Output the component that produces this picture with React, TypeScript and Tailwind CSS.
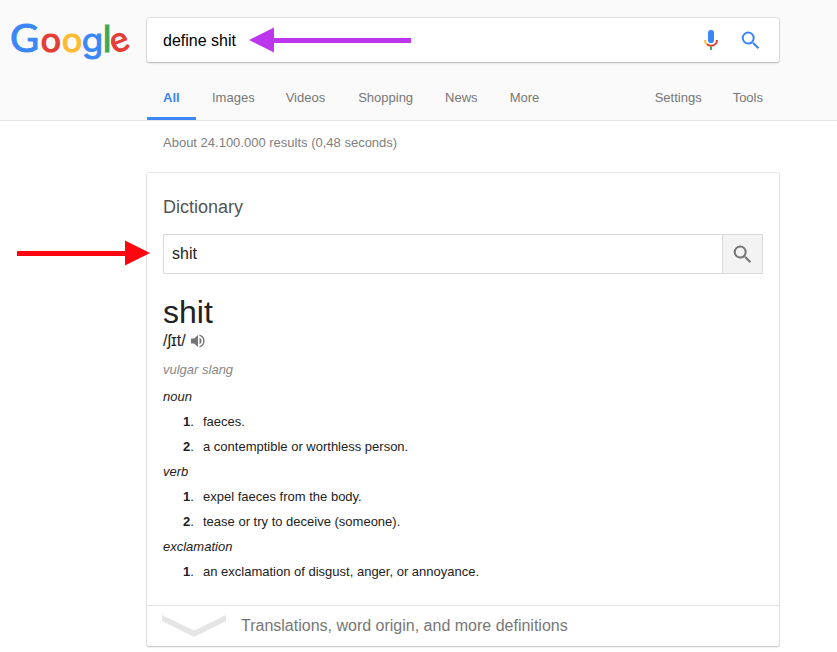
import { useState } from "react";

const TABS = [
  { label: "All", gap: "" },
  { label: "Images", gap: "ml-4" },
  { label: "Videos", gap: "ml-[31px]" },
  { label: "Shopping", gap: "ml-[33px]" },
  { label: "News", gap: "ml-8" },
  { label: "More", gap: "ml-8" },
];

const SENSES = [
  { part: "noun", items: ["faeces.", "a contemptible or worthless person."] },
  { part: "verb", items: ["expel faeces from the body.", "tease or try to deceive (someone)."] },
  { part: "exclamation", items: ["an exclamation of disgust, anger, or annoyance."] },
];

const SEARCH_PATH =
  "M15.5 14h-.79l-.28-.27A6.47 6.47 0 0 0 16 9.5 6.5 6.5 0 1 0 9.5 16c1.61 0 3.09-.59 4.23-1.57l.27.28v.79l5 4.99L20.49 19l-4.99-5zm-6 0a4.5 4.5 0 1 1 0-9 4.5 4.5 0 0 1 0 9z";

function Logo() {
  return (
    <svg className="block h-[72px] w-[136px]" viewBox="-10 -17 136 72" aria-label="Google">
      <g fontFamily="Lato, sans-serif" fontSize="37" textAnchor="middle" strokeWidth="1.2">
        <text transform="translate(14.5 33) scale(1.08 1.02)" strokeWidth="0.9" fill="#3b87f7" stroke="#3b87f7">G</text>
        <text transform="translate(40.900 32.500) scale(.96 .96)" fill="#e63c35" stroke="#e63c35">o</text>
        <text transform="translate(62 32.500) scale(.96 .96)" fill="#fcbb34" stroke="#fcbb34">o</text>
        <text transform="translate(82.500 32.500) scale(1.03 .97)" fontFamily="Inter, sans-serif" fontSize="34" strokeWidth="1" fill="#3b87f7" stroke="#3b87f7">g</text>
        <text x="97" y="32.500" fontSize="37" strokeWidth="1" fill="#41a756" stroke="#41a756">l</text>
        <text transform="translate(109.300 32.500) rotate(-22 0 -9.500) scale(.93 .95)" fill="#e63c35" stroke="#e63c35">e</text>
      </g>
    </svg>
  );
}

function MicIcon() {
  return (
    <svg className="h-6 w-6" viewBox="0 0 24 24" fill="none">
      <rect x="9" y="2" width="6" height="13" rx="2.8" fill="#3b87f7" />
      <path d="M6 12c0 1.900.7 3.300 1.900 4.300" stroke="#fcbb34" strokeWidth="2" />
      <path d="M7.900 16.300c1.100 1 2.500 1.500 4.100 1.500 3.400 0 6-2.500 6-5.800" stroke="#e63c35" strokeWidth="2" />
      <path d="M11 18.500h2V22h-2z" fill="#41a756" />
    </svg>
  );
}

export default function App() {
  const [query, setQuery] = useState("define shit");
  const [word, setWord] = useState("shit");

  return (
    <div className="relative h-[652px] w-[837px] overflow-hidden bg-white font-['Liberation_Sans',Arial,sans-serif] text-[13px] text-[#222]">
      <header className="h-[121px] border-b border-[#e5e5e5] bg-[#fafafa]">
        <div className="flex h-[62px] items-end">
          <div className="h-[60px] w-[147px]">
            <Logo />
          </div>
          <div className="flex h-11 w-[632px] items-center rounded-[2px] bg-white pr-4 pl-4 shadow-[0_1px_2px_rgba(0,0,0,0.22),0_0_0_1px_rgba(0,0,0,0.08)]">
            <input
              value={query}
              onChange={(e) => setQuery(e.target.value)}
              className="min-w-0 flex-1 pt-0.5 text-base text-black outline-none"
            />
            <MicIcon />
            <svg className="ml-4 h-6 w-6" viewBox="0.3 -0.5 24 24" fill="#3b87f7">
              <path d={SEARCH_PATH} />
            </svg>
          </div>
        </div>
        <nav className="ml-[147px] flex h-[58px] w-[632px] items-end text-[#777]">
          {TABS.map((tab, i) => (
            <a
              key={tab.label}
              className={`h-[45px] border-b-3 pt-[13px] leading-5 ${tab.gap} ${
                i === 0 ? "w-[49px] border-[#3b87f7] pl-4 font-bold text-[#3b87f7]" : "border-transparent"
              }`}
            >
              {tab.label}
            </a>
          ))}
          <a className="mr-[31px] ml-auto h-[45px] pt-[13px] leading-5">Settings</a>
          <a className="mr-4 h-[45px] pt-[13px] leading-5">Tools</a>
        </nav>
      </header>

      <p className="mt-3 ml-[163px] leading-5 text-[#808080]">About 24.100.000 results (0,48 seconds)</p>

      <section className="mt-5 ml-[147px] h-[473px] w-[632px] rounded-[2px] bg-white shadow-[0_1px_2px_rgba(0,0,0,0.2),0_0_0_1px_rgba(0,0,0,0.08)]">
        <div className="h-[432px] px-4 pt-[22px]">
          <h2 className="text-lg leading-6 text-[#545454]">Dictionary</h2>
          <div className="mt-[15px] flex h-10 rounded-[1px] border border-[#d9d9d9]">
            <input
              value={word}
              onChange={(e) => setWord(e.target.value)}
              className="min-w-0 flex-1 pl-2 text-base text-[#222] outline-none"
            />
            <button className="flex w-10 items-center justify-center border-l border-[#d9d9d9] bg-[#f3f3f3]">
              <svg className="h-6 w-6" viewBox="0.3 -0.5 24 24" fill="#757575">
                <path d={SEARCH_PATH} />
              </svg>
            </button>
          </div>
          <h1 className="mt-5 text-[32px] leading-9">shit</h1>
          <div className="-mt-px flex h-6 items-center gap-1 text-base">
            <span>/ʃɪt/</span>
            <svg className="h-4 w-4" viewBox="0 0 16 16" fill="#757575">
              <path d="M1 5.500v5h3.200L8 14V2L4.200 5.500z" />
              <path d="M9.500 4.800v6.400a3.500 3.500 0 0 0 0-6.400z" />
              <path d="M9.500 1.500v1.600a5.100 5.100 0 0 1 0 9.800v1.600a6.700 6.700 0 0 0 0-13z" />
            </svg>
          </div>
          <p className="mt-[5px] leading-6 text-[#878787] italic">vulgar slang</p>
          <div className="mt-0.5 leading-[25px]">
            {SENSES.map((sense) => (
              <div key={sense.part}>
                <p className="italic">{sense.part}</p>
                <ol>
                  {sense.items.map((item, i) => (
                    <li key={item} className="flex pl-5">
                      <span className="w-5">
                        <b>{i + 1}</b>.
                      </span>
                      {item}
                    </li>
                  ))}
                </ol>
              </div>
            ))}
          </div>
        </div>
        <div className="flex h-[41px] items-center border-t border-[#e5e5e5] pl-[15px] text-base text-[#777]">
          <svg className="mr-[15px] h-[22px] w-16" viewBox="0 0 64 22" fill="#e5e5e5">
            <path d="M0 0l32 15.500L64 0v6L32 22 0 6z" />
          </svg>
          Translations, word origin, and more definitions
        </div>
      </section>

      {/* Callout arrows */}
      <svg className="absolute top-[27px] left-[249px] h-[26px] w-[163px]" viewBox="0 0 163 26" fill="#bb36ec">
        <path d="M0 13L25 .5V11H162v5H25v9.500z" />
      </svg>
      <svg className="absolute top-[240px] left-[17px] h-[26px] w-[133px]" viewBox="0 0 133 26" fill="#ff0510">
        <path d="M133 13L108 .5V11H0v5h108v9.500z" />
      </svg>
    </div>
  );
}
